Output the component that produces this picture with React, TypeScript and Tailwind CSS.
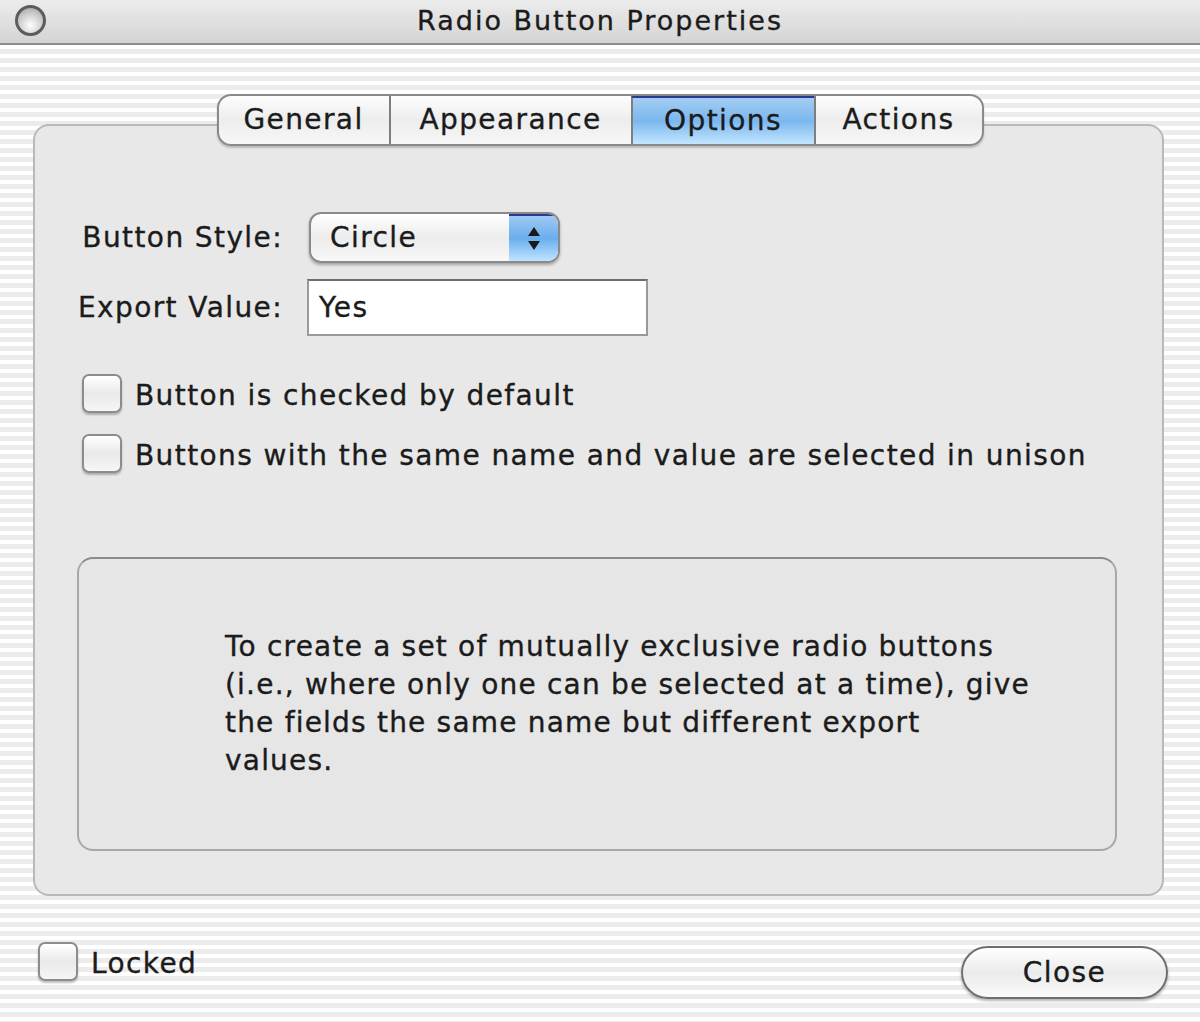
import { useState } from 'react';

const tabs = ['General', 'Appearance', 'Options', 'Actions'];

function Checkbox({ checked, onClick }: { checked: boolean; onClick: () => void }) {
    return (
        <button
            onClick={onClick}
            className="w-[40px] h-[39px] shrink-0 rounded-[7px] border-2 border-[#8c8c8c] bg-[linear-gradient(to_bottom,#ffffff,#e9e9e9_50%,#f6f6f6)] shadow-[0_2px_2px_rgba(0,0,0,0.25)] flex items-center justify-center text-[26px] leading-none text-[#222]"
        >
            {checked ? '✓' : ''}
        </button>
    );
}

export default function App() {
    const [tab, setTab] = useState('Options');
    const [checkedDefault, setCheckedDefault] = useState(false);
    const [unison, setUnison] = useState(false);
    const [locked, setLocked] = useState(false);

    return (
        <div
            className="w-[1200px] h-[1022px] flex flex-col overflow-hidden text-[#1b1b1b] tracking-[1.4px] [-webkit-text-stroke:0.35px_#1b1b1b] bg-[repeating-linear-gradient(to_bottom,#ffffff_0px,#ffffff_4px,#ececec_4px,#ececec_9px)]"
            style={{ fontFamily: '"DejaVu Sans", "Liberation Sans", sans-serif' }}
        >
            {/* Title bar */}
            <div className="h-[45px] shrink-0 flex items-center relative border-b-2 border-[#8e8e8e] bg-[linear-gradient(to_bottom,#ececec,#e0e0e0_50%,#d4d4d4)]">
                <div className="absolute left-[15px] top-[5px] w-[31px] h-[31px] rounded-full border-[3px] border-[#5c5c5c] bg-[radial-gradient(circle_at_50%_70%,#ffffff,#c8c8c8_60%,#9a9a9a)]" />
                <div className="flex-1 text-center text-[27px] tracking-[2px] leading-none pb-[2px]">Radio Button Properties</div>
            </div>

            {/* Tabs */}
            <div className="mt-[49px] flex justify-center relative z-10">
                <div className="flex h-[52px] rounded-[14px] border-2 border-[#8a8a8a] overflow-hidden shadow-[0_2px_2px_rgba(0,0,0,0.2)] bg-[linear-gradient(to_bottom,#fdfdfd,#ededed_50%,#f7f7f7)]">
                    {tabs.map((t, i) => (
                        <button
                            key={t}
                            onClick={() => setTab(t)}
                            className={`h-full flex items-center justify-center text-[28px] leading-none ${i > 0 ? 'border-l-2 border-[#7e7e7e]' : ''} ${
                                t === 'Appearance' ? 'w-[242px]' : t === 'General' ? 'w-[170px]' : t === 'Options' ? 'w-[183px]' : 'w-[168px]'
                            } ${tab === t ? 'bg-[linear-gradient(to_bottom,#a4cdf2,#7ab7ee_50%,#c3e6ff)] border-t-2 border-t-[#2a3b8f]' : ''}`}
                        >
                            {t}
                        </button>
                    ))}
                </div>
            </div>

            {/* Panel */}
            <div className="ml-[33px] mt-[-22px] w-[1131px] h-[772px] shrink-0 rounded-[16px] border-2 border-[#b9b9b9] bg-[#e8e8e8] flex flex-col">
                <div className="pt-[86px] grid grid-cols-[248px_auto] gap-x-[26px] gap-y-[16px] items-center justify-start">
                    <div className="text-right text-[28px] leading-none">Button Style:</div>
                    <div className="w-[251px] h-[51px] rounded-[12px] border-2 border-[#8a8a8a] shadow-[0_2px_3px_rgba(0,0,0,0.3)] flex overflow-hidden bg-[linear-gradient(to_bottom,#ffffff,#ececec_50%,#f8f8f8)]">
                        <div className="flex-1 flex items-center pl-[19px] text-[28px] leading-none">Circle</div>
                        <div className="w-[49px] flex flex-col items-center justify-center gap-[5px] border-t-2 border-[#2a3b8f] bg-[linear-gradient(to_bottom,#9ec8f0,#6aaeee_50%,#bfe4ff)]">
                            <svg width="12" height="9" viewBox="0 0 12 9"><path d="M6 0 L12 9 L0 9 Z" fill="#1a1a1a" /></svg>
                            <svg width="12" height="9" viewBox="0 0 12 9"><path d="M0 0 L12 0 L6 9 Z" fill="#1a1a1a" /></svg>
                        </div>
                    </div>
                    <div className="text-right text-[28px] leading-none">Export Value:</div>
                    <div className="ml-[-2px] w-[341px] h-[57px] bg-white border-2 border-[#9a9a9a] border-t-[#6e6e6e] flex items-center pl-[10px] text-[28px] leading-none">Yes</div>
                </div>

                <div className="pl-[47px] mt-[38px] flex flex-col gap-[21px]">
                    <label className="flex items-center gap-[13px] text-[28px] leading-none">
                        <Checkbox checked={checkedDefault} onClick={() => setCheckedDefault(!checkedDefault)} />
                        <span className="pt-[4px]">Button is checked by default</span>
                    </label>
                    <label className="flex items-center gap-[13px] text-[28px] leading-none">
                        <Checkbox checked={unison} onClick={() => setUnison(!unison)} />
                        <span className="pt-[4px]">Buttons with the same name and value are selected in unison</span>
                    </label>
                </div>

                <div className="ml-[42px] mr-[45px] mt-[84px] h-[294px] rounded-[16px] border-2 border-[#a8a8a8] border-t-[#8c8c8c] bg-[#e6e6e6] pl-[146px] pt-[69px] text-[28px] leading-[38px] tracking-[1.2px]">
                    <div>To create a set of mutually exclusive radio buttons</div>
                    <div>(i.e., where only one can be selected at a time), give</div>
                    <div>the fields the same name but different export</div>
                    <div>values.</div>
                </div>
            </div>

            {/* Footer */}
            <div className="flex items-start justify-between pl-[38px] pr-[32px] mt-[46px]">
                <label className="flex items-center gap-[13px] text-[28px] leading-none">
                    <Checkbox checked={locked} onClick={() => setLocked(!locked)} />
                    <span className="pt-[4px]">Locked</span>
                </label>
                <button className="mt-[4px] w-[207px] h-[53px] rounded-full border-2 border-[#6f6f6f] shadow-[0_2px_3px_rgba(0,0,0,0.3)] bg-[linear-gradient(to_bottom,#ffffff,#ebebeb_50%,#f9f9f9)] text-[28px] leading-none">
                    Close
                </button>
            </div>
        </div>
    );
}
